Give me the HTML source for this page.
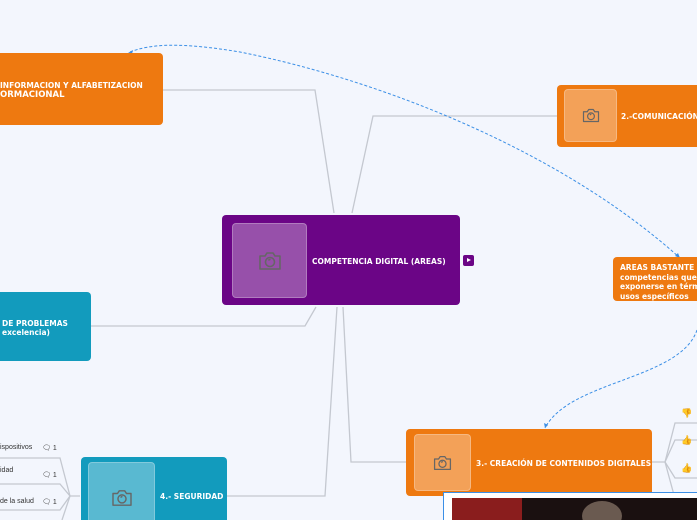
<!DOCTYPE html>
<html><head><meta charset="utf-8"><style>
html,body{margin:0;width:697px;height:520px;overflow:hidden}
body{background:#f3f6fd;font-family:"Liberation Sans","DejaVu Sans",sans-serif;position:relative}
.n{position:absolute;border-radius:4px;color:#fff;font-weight:bold;font-size:7.5px;font-family:"DejaVu Sans",sans-serif;box-sizing:border-box}
.img{position:absolute;border-radius:4px;background:rgba(255,255,255,.3);border:1px solid rgba(255,255,255,.25);box-sizing:border-box;display:flex;align-items:center;justify-content:center}
.t{position:absolute;line-height:9px;white-space:nowrap}
.o{background:#ee7910}.b{background:#129bbd}.p{background:#6b0586}
.s{position:absolute;font-size:7px;color:#333;white-space:nowrap}
</style></head><body>
<svg width="697" height="520" style="position:absolute;left:0;top:0">
<g fill="none" stroke="#c4c8d0" stroke-width="1.3">
<polyline points="163,90 315,90 334,213"/>
<polyline points="557,116 373,116 352,213"/>
<polyline points="91,326 305,326 316,307"/>
<polyline points="227,496 325,496 337,307"/>
<polyline points="406,462 351,462 343,307"/>
<polyline points="80,496 70,496 60,458 0,458"/>
<polyline points="70,496 60,484 0,484"/>
<polyline points="70,496 60,510 0,510"/>
<polyline points="70,496 62,520"/>
<polyline points="652,462 665,462 675,423 697,423"/>
<polyline points="665,462 675,440 697,440"/>
<polyline points="665,462 675,478 697,478"/>
<polyline points="665,462 674,495"/>
</g>
<g fill="none" stroke="#3b8fe6" stroke-width="1" stroke-dasharray="3,2">
<path d="M130,52 C150,44 180,42 240,52 C380,80 560,150 680,258"/>
<path d="M697,330 C680,380 570,380 545,428"/>
</g>
<path d="M128,53 l5,-3 l-1,4z M680,258 l-5,-2 l3,-3z M545,428 l-1,-5 l4,2z" fill="#3b8fe6"/>
</svg>
<svg width="0" height="0" style="position:absolute"><defs><symbol id="cam" viewBox="0 0 24 20"><g fill="none" stroke="#666" stroke-width="1.6"><path d="M2,5 h5 l2,-3 h6 l2,3 h5 v13 h-20z" stroke-linejoin="round"/><circle cx="12" cy="11" r="4.5"/><path d="M10.5,9.5 a2,2 0 0 1 2,-1"/></g></symbol></defs></svg>
<div class="n o" style="left:-5px;top:53px;width:168px;height:72px"><div class="t" style="left:5px;top:28px">INFORMACION Y ALFABETIZACION<br><span style="font-size:8.5px">ORMACIONAL</span></div></div>
<div class="n p" style="left:222px;top:215px;width:238px;height:90px"><div class="img" style="left:10px;top:8px;width:75px;height:75px"><svg width="24" height="20"><use href="#cam"/></svg></div><div class="t" style="left:90px;top:42px">COMPETENCIA DIGITAL (AREAS)</div></div>
<div style="position:absolute;left:463px;top:255px;width:11px;height:11px;background:#6b0586;border-radius:2px"><div style="position:absolute;left:4px;top:3px;border-left:4px solid #fff;border-top:2.5px solid transparent;border-bottom:2.5px solid transparent"></div></div>
<div class="n o" style="left:557px;top:85px;width:150px;height:62px"><div class="img" style="left:7px;top:4px;width:53px;height:53px"><svg width="18" height="15"><use href="#cam"/></svg></div><div class="t" style="left:64px;top:27px">2.-COMUNICACIÓN</div></div>
<div class="n o" style="left:613px;top:257px;width:90px;height:44px"><div class="t" style="left:7px;top:6px;line-height:9.5px">AREAS BASTANTE M<br>competencias que p<br>exponerse en térmi<br>usos específicos</div></div>
<div class="n b" style="left:-5px;top:292px;width:96px;height:69px"><div class="t" style="left:7px;top:27px">DE PROBLEMAS<br>excelencia)</div></div>
<div class="n b" style="left:81px;top:457px;width:146px;height:80px"><div class="img" style="left:7px;top:5px;width:67px;height:67px;align-items:flex-start;padding-top:26px"><svg width="22" height="18"><use href="#cam"/></svg></div><div class="t" style="left:79px;top:35px">4.- SEGURIDAD</div></div>
<div class="n o" style="left:406px;top:429px;width:246px;height:67px"><div class="img" style="left:8px;top:5px;width:57px;height:57px"><svg width="19" height="16"><use href="#cam"/></svg></div><div class="t" style="left:70px;top:30px">3.- CREACIÓN DE CONTENIDOS DIGITALES</div></div>
<div style="position:absolute;left:443px;top:492px;width:260px;height:40px;background:#fff;border:1.5px solid #3b8fe6;box-sizing:border-box"><div style="position:absolute;left:8px;top:5px;width:250px;height:40px;background:#1a1010"><div style="position:absolute;left:0;top:0;width:70px;height:30px;background:#8a1d1d"></div><div style="position:absolute;left:130px;top:3px;width:40px;height:30px;border-radius:50%;background:#6a5a50"></div></div></div>
<div class="s" style="left:0;top:444px">ispositivos</div><div class="s" style="left:0;top:467px">idad</div><div class="s" style="left:0;top:498px">de la salud</div>
<div class="s" style="left:42px;top:444px">🗨 1</div><div class="s" style="left:42px;top:471px">🗨 1</div><div class="s" style="left:42px;top:498px">🗨 1</div>
<div class="s" style="left:681px;top:408px;font-size:9px">👎</div><div class="s" style="left:681px;top:435px;font-size:9px">👍</div><div class="s" style="left:681px;top:463px;font-size:9px">👍</div>
</body></html>
